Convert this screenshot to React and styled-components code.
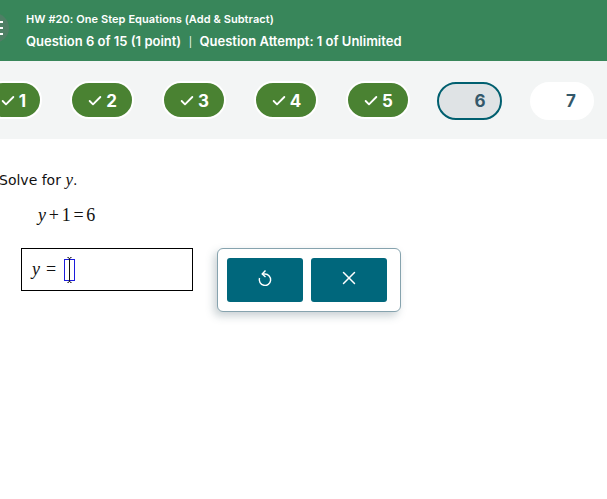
import styled, { createGlobalStyle } from "styled-components";
import { Check, X } from "lucide-react";

const GlobalStyle = createGlobalStyle`
  html, body {
    margin: 0;
    padding: 0;
    background: #fff;
    overflow: hidden;
  }
`;

const Page = styled.div`
  width: 607px;
  height: 499px;
  overflow: hidden;
  font-family: "Inter", "Liberation Sans", sans-serif;
`;

const Header = styled.header`
  height: 61px;
  box-sizing: border-box;
  background: #38865a;
  color: #fff;
  padding: 12px 0 0 26px;
  position: relative;
`;

const MenuCircle = styled.div`
  position: absolute;
  left: -21px;
  top: 13px;
  width: 30px;
  height: 30px;
  border-radius: 50%;
  background: #4f7f65;
  display: flex;
  flex-direction: column;
  align-items: flex-end;
  justify-content: center;
  gap: 4px;
  padding-right: 6px;
  box-sizing: border-box;

  i {
    display: block;
    width: 3px;
    height: 2px;
    background: #fff;
  }
`;

const Title = styled.div`
  font-size: 11px;
  font-weight: 600;
  line-height: 14px;
  letter-spacing: 0.07px;
`;

const Subtitle = styled.div`
  margin-top: 7px;
  font-size: 13px;
  font-weight: 600;
  line-height: 16px;
  white-space: nowrap;

  span {
    margin: 0 7.5px;
    font-weight: 400;
    font-size: 10px;
  }
`;

const NavBar = styled.nav`
  height: 78px;
  background: #f3f5f5;
  position: relative;
`;

const Pill = styled.div`
  position: absolute;
  left: ${(p) => p.$left}px;
  top: 20px;
  width: ${(p) => p.$width}px;
  height: 38px;
  box-sizing: border-box;
  border-radius: 19px;
  padding-top: 1px;
  display: flex;
  align-items: center;
  justify-content: center;
  gap: 3px;
  font-size: 17px;
  font-weight: 700;
  background: #4a8232;
  color: #fff;
  border: 2px solid #fff;
`;

const PlainPill = styled(Pill)`
  background: ${(p) => (p.$current ? "#dfe3e5" : "#fff")};
  color: #34586a;
  border: 2px solid ${(p) => (p.$current ? "#005f6f" : "#fff")};
  padding-left: ${(p) => (p.$current ? 21 : 18)}px;
  padding-top: 0;
  top: 21px;
`;

const Body = styled.main`
  padding: 32px 0 0 0;
`;

const Prompt = styled.p`
  margin: 0 0 0 -1px;
  font-family: "DejaVu Sans", sans-serif;
  font-size: 14px;
  line-height: 18px;
  color: #111;

  em {
    font-family: "Liberation Serif", serif;
    font-size: 17px;
  }
`;

const Equation = styled.div`
  margin: 15px 0 0 38px;
  font-family: "Liberation Serif", serif;
  font-size: 18px;
  line-height: 22px;
  color: #111;

  em {
    font-style: italic;
  }
`;

const Op = styled.span`
  margin: 0 2.75px;
`;

const AnswerRow = styled.div`
  margin: 22px 0 0 21px;
  display: flex;
  align-items: flex-start;
  gap: 24px;
`;

const AnswerBox = styled.div`
  width: 172px;
  height: 43px;
  box-sizing: border-box;
  border: 1px solid #000;
  display: flex;
  align-items: center;
  padding-left: 10px;
  font-family: "Liberation Serif", serif;
  font-size: 18px;
  color: #111;

  em {
    font-style: italic;
  }

  b {
    font-weight: 400;
    margin-left: 6px;
  }
`;

const Caret = styled.div`
  width: 11px;
  height: 22px;
  box-sizing: border-box;
  margin-left: 8px;
  border: 1px solid #1c1cdc;
  position: relative;

  svg {
    position: absolute;
    left: 0;
    top: -3px;
  }
`;

const Toolbar = styled.div`
  width: 184px;
  height: 64px;
  box-sizing: border-box;
  border: 1px solid #86a3ae;
  border-radius: 6px;
  background: #fff;
  box-shadow: -3px 4px 8px rgba(60, 90, 100, 0.28);
  display: flex;
  gap: 8px;
  padding: 9px;
`;

const ToolButton = styled.button`
  width: 76px;
  height: 44px;
  padding: 0 0 4px;
  border: 0;
  border-radius: 3px;
  background: #00677c;
  color: #fff;
  display: flex;
  align-items: center;
  justify-content: center;
`;

const done = [
  { n: 1, left: -16, width: 58 },
  { n: 2, left: 70, width: 64 },
  { n: 3, left: 162, width: 64 },
  { n: 4, left: 254, width: 64 },
  { n: 5, left: 346, width: 64 },
];

function UndoIcon() {
  return (
    <svg width="16" height="18" viewBox="0 0 16 18" fill="none" stroke="currentColor" strokeWidth="1.4">
      <path d="M8.5 1.5 5.2 5l3.3 3" />
      <path d="M5.2 5H8a5.7 5.7 0 1 1-5.5 4" />
    </svg>
  );
}

function IBeam() {
  return (
    <svg width="9" height="26" viewBox="0 0 9 26" fill="none" stroke="#111" strokeWidth="1">
      <path d="M4.5 2v22M2.5 0.5h1l1 1.5 1-1.5h1M2.5 25.5h1l1-1.5 1 1.5h1" />
    </svg>
  );
}

export default function App() {
  return (
    <Page>
      <GlobalStyle />
      <Header>
        <MenuCircle>
          <i />
          <i />
          <i />
        </MenuCircle>
        <Title>HW #20: One Step Equations (Add &amp; Subtract)</Title>
        <Subtitle>
          Question 6 of 15 (1 point)<span>|</span>Question Attempt: 1 of Unlimited
        </Subtitle>
      </Header>
      <NavBar>
        {done.map((q) => (
          <Pill key={q.n} $left={q.left} $width={q.width}>
            <Check size={16} strokeWidth={2.8} />
            {q.n}
          </Pill>
        ))}
        <PlainPill $left={437} $width={65} $current>
          6
        </PlainPill>
        <PlainPill $left={530} $width={64}>
          7
        </PlainPill>
      </NavBar>
      <Body>
        <Prompt>
          Solve for <em>y</em>.
        </Prompt>
        <Equation>
          <em>y</em>
          <Op>+</Op>1<Op>=</Op>6
        </Equation>
        <AnswerRow>
          <AnswerBox>
            <em>y</em>
            <b>=</b>
            <Caret>
              <IBeam />
            </Caret>
          </AnswerBox>
          <Toolbar>
            <ToolButton aria-label="Undo">
              <UndoIcon />
            </ToolButton>
            <ToolButton aria-label="Clear">
              <X size={22} strokeWidth={1.6} />
            </ToolButton>
          </Toolbar>
        </AnswerRow>
      </Body>
    </Page>
  );
}
